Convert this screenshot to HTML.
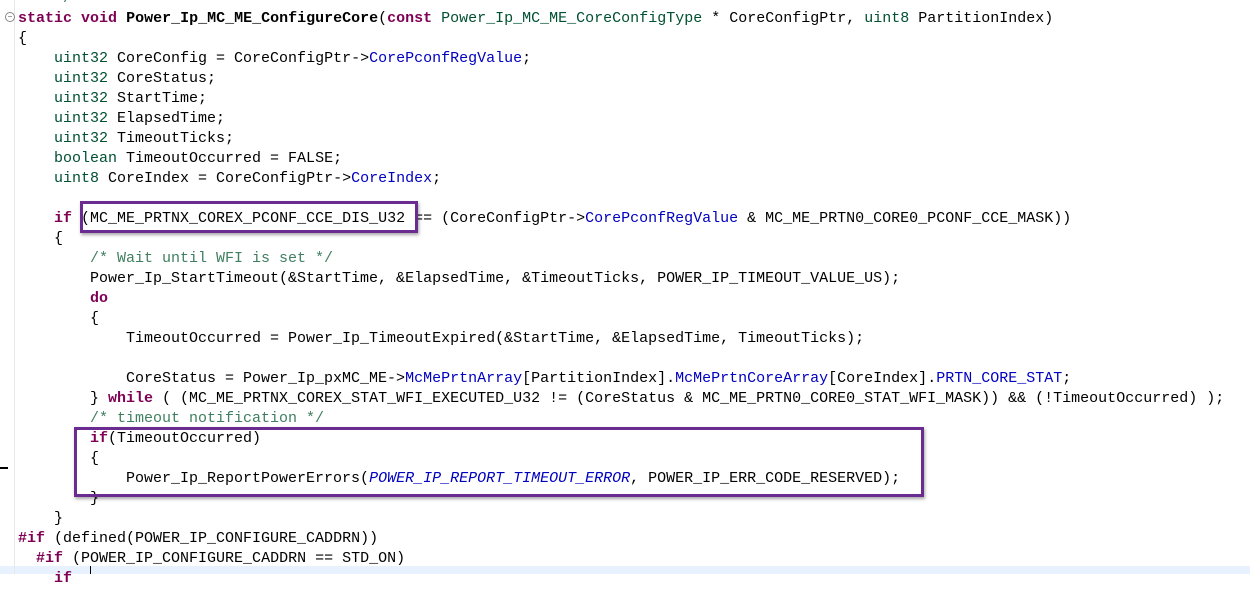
<!DOCTYPE html>
<html><head><meta charset="utf-8"><style>
body{margin:0;width:1250px;height:574px;overflow:hidden;background:#fff;position:relative}
.gut{position:absolute;left:14px;top:0;width:1px;height:574px;background:#e8e8e8}
pre{position:absolute;left:18px;top:-11px;margin:0;font-family:"Liberation Mono",monospace;font-size:15px;line-height:20px;color:#000}
.k{color:#7f0055;font-weight:bold}.t{color:#005032}.f{color:#0000c0}.c{color:#3f7f5f}.m{color:#0000c0;font-style:italic}.b{font-weight:bold}
.box{position:absolute;border:3px solid #6a2c91;box-shadow:1px 2px 3px rgba(0,0,0,.35)}
.cur{position:absolute;left:0;top:566px;width:1250px;height:8px;background:#e8f2fe}
</style></head><body>
<div class="cur"></div>
<div class="gut"></div>
<div style="position:absolute;left:5px;top:12px;width:8px;height:8px;border:1px solid #888;border-radius:50%;font-size:8px;line-height:8px;text-align:center;color:#555;font-family:'Liberation Sans'">−</div>
<div style="position:absolute;left:0;top:467px;width:8px;height:2px;background:#000"></div>
<div style="position:absolute;left:90px;top:566px;width:1px;height:8px;background:#000"></div>
<pre>    <span class="c">*/</span>
<span class="k">static</span> <span class="k">void</span> <span class="b">Power_Ip_MC_ME_ConfigureCore</span>(<span class="k">const</span> <span class="t">Power_Ip_MC_ME_CoreConfigType</span> * CoreConfigPtr, <span class="t">uint8</span> PartitionIndex)
{
    <span class="t">uint32</span> CoreConfig = CoreConfigPtr-&gt;<span class="f">CorePconfRegValue</span>;
    <span class="t">uint32</span> CoreStatus;
    <span class="t">uint32</span> StartTime;
    <span class="t">uint32</span> ElapsedTime;
    <span class="t">uint32</span> TimeoutTicks;
    <span class="t">boolean</span> TimeoutOccurred = FALSE;
    <span class="t">uint8</span> CoreIndex = CoreConfigPtr-&gt;<span class="f">CoreIndex</span>;

    <span class="k">if</span> (MC_ME_PRTNX_COREX_PCONF_CCE_DIS_U32 == (CoreConfigPtr-&gt;<span class="f">CorePconfRegValue</span> &amp; MC_ME_PRTN0_CORE0_PCONF_CCE_MASK))
    {
        <span class="c">/* Wait until WFI is set */</span>
        Power_Ip_StartTimeout(&amp;StartTime, &amp;ElapsedTime, &amp;TimeoutTicks, POWER_IP_TIMEOUT_VALUE_US);
        <span class="k">do</span>
        {
            TimeoutOccurred = Power_Ip_TimeoutExpired(&amp;StartTime, &amp;ElapsedTime, TimeoutTicks);

            CoreStatus = Power_Ip_pxMC_ME-&gt;<span class="f">McMePrtnArray</span>[PartitionIndex].<span class="f">McMePrtnCoreArray</span>[CoreIndex].<span class="f">PRTN_CORE_STAT</span>;
        } <span class="k">while</span> ( (MC_ME_PRTNX_COREX_STAT_WFI_EXECUTED_U32 != (CoreStatus &amp; MC_ME_PRTN0_CORE0_STAT_WFI_MASK)) &amp;&amp; (!TimeoutOccurred) );
        <span class="c">/* timeout notification */</span>
        <span class="k">if</span>(TimeoutOccurred)
        {
            Power_Ip_ReportPowerErrors(<span class="m">POWER_IP_REPORT_TIMEOUT_ERROR</span>, POWER_IP_ERR_CODE_RESERVED);
        }
    }
<span class="k">#if</span> (defined(POWER_IP_CONFIGURE_CADDRN))
  <span class="k">#if</span> (POWER_IP_CONFIGURE_CADDRN == STD_ON)
    <span class="k">if</span></pre>
<div class="box" style="left:80px;top:201px;width:332px;height:26px"></div>
<div class="box" style="left:74px;top:427px;width:844px;height:64px"></div>
</body></html>
